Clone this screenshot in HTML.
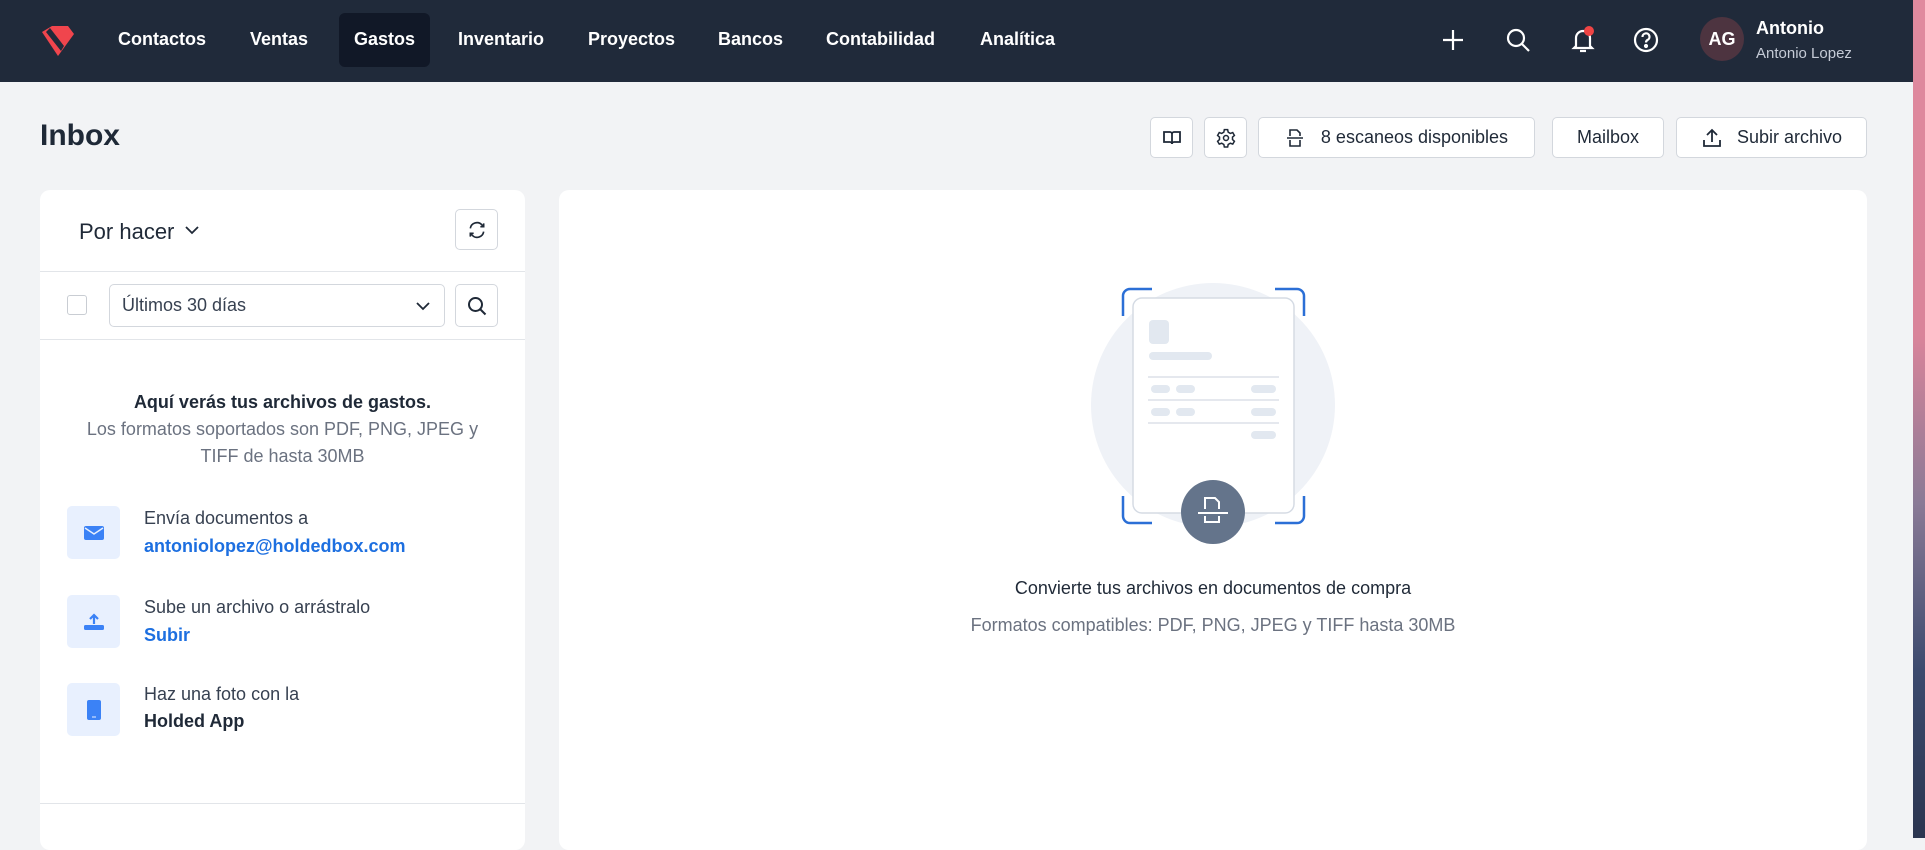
<!DOCTYPE html>
<html><head><meta charset="utf-8"><style>
*{box-sizing:border-box;margin:0;padding:0}
body{width:1925px;height:838px;overflow:hidden;background:#f2f3f5;font-family:"Liberation Sans",sans-serif;color:#1f2937;position:relative}
.a{position:absolute}
.nav{left:0;top:0;width:1913px;height:82px;background:#202a3a}
.ni{position:absolute;top:29px;color:#fff;font-weight:bold;font-size:18px}
.btn{position:absolute;background:#fff;border:1px solid #d3d7dd;border-radius:5px;top:117px;height:41px;display:flex;align-items:center;justify-content:center;font-size:18px;color:#1f2937}
.panel{background:#fff;border-radius:10px}
.ib{position:absolute;left:67px;width:53px;height:53px;background:#e8f0fe;border-radius:5px;display:flex;align-items:center;justify-content:center}
.t{position:absolute;left:144px;font-size:18px;color:#374151}
</style></head><body>
<div class="a nav"></div>
<svg class="a" style="left:38px;top:24px" width="40" height="34" viewBox="0 0 40 34"><path d="M4 8 L14 2 L30 2 L36 10 L20 32 Z" fill="#f0454d"/><path d="M12 4 L26 22 L23 27 L8 8 Z" fill="#202a3a"/></svg>
<div class="a" style="left:339px;top:13px;width:91px;height:54px;background:#111827;border-radius:6px"></div>
<div class="ni" style="left:118px">Contactos</div>
<div class="ni" style="left:250px">Ventas</div>
<div class="ni" style="left:354px">Gastos</div>
<div class="ni" style="left:458px">Inventario</div>
<div class="ni" style="left:588px">Proyectos</div>
<div class="ni" style="left:718px">Bancos</div>
<div class="ni" style="left:826px">Contabilidad</div>
<div class="ni" style="left:980px">Analítica</div>
<svg class="a" style="left:1440px;top:27px" width="26" height="26" viewBox="0 0 26 26" stroke="#fff" stroke-width="2.2" fill="none"><path d="M13 3v20M3 13h20"/></svg>
<svg class="a" style="left:1504px;top:26px" width="28" height="28" viewBox="0 0 28 28" stroke="#fff" stroke-width="2.2" fill="none"><circle cx="12" cy="12" r="8"/><path d="M18 18l7 7"/></svg>
<svg class="a" style="left:1569px;top:25px" width="28" height="30" viewBox="0 0 28 30" stroke="#fff" stroke-width="2.2" fill="none"><path d="M7 21V13a7 7 0 0 1 14 0v8l2 2H5z"/><path d="M11 26h6"/><circle cx="20" cy="6" r="5" fill="#ef4444" stroke="none"/></svg>
<svg class="a" style="left:1632px;top:26px" width="28" height="28" viewBox="0 0 28 28" fill="none" stroke="#fff" stroke-width="2.2"><circle cx="14" cy="14" r="11"/><path d="M10.5 11a3.5 3.5 0 1 1 5 3c-1 .6-1.5 1.3-1.5 2.5" /><circle cx="14" cy="20" r="1" fill="#fff"/></svg>
<div class="a" style="left:1700px;top:17px;width:44px;height:44px;border-radius:50%;background:#4d3440;color:#fff;font-weight:bold;font-size:18px;display:flex;align-items:center;justify-content:center">AG</div>
<div class="a" style="left:1756px;top:18px;color:#fff;font-weight:bold;font-size:18px">Antonio</div>
<div class="a" style="left:1756px;top:45px;color:#c5cbd6;font-size:15px">Antonio Lopez</div>
<div class="a" style="left:1913px;top:0;width:12px;height:838px;background:linear-gradient(#e08a9e 0%,#d9849a 40%,#8a7a96 60%,#3c4a6e 80%,#2b3550 100%)"></div>

<div class="a" style="left:40px;top:119px;font-size:30px;font-weight:bold;color:#1f2937">Inbox</div>
<div class="btn" style="left:1150px;width:43px"><svg width="20" height="18" viewBox="0 0 20 18" fill="none" stroke="#1f2937" stroke-width="1.8"><path d="M2 3h6a2 2 0 0 1 2 2v10a2 2 0 0 0-2-2H2zM18 3h-6a2 2 0 0 0-2 2v10a2 2 0 0 1 2-2h6z"/></svg></div>
<div class="btn" style="left:1204px;width:43px"><svg width="20" height="20" viewBox="0 0 24 24" fill="none" stroke="#1f2937" stroke-width="1.8"><circle cx="12" cy="12" r="3"/><path d="M10 2h4l.6 3 2.6 1.5 2.9-1 2 3.4-2.3 2v3l2.3 2-2 3.4-2.9-1-2.6 1.5-.6 3h-4l-.6-3-2.6-1.5-2.9 1-2-3.4 2.3-2v-3l-2.3-2 2-3.4 2.9 1L9.4 5z"/></svg></div>
<div class="btn" style="left:1258px;width:277px"><svg width="20" height="22" viewBox="0 0 20 22" fill="none" stroke="#1f2937" stroke-width="1.6" style="margin-right:16px"><path d="M5 9V3h7l3 3v3M5 13v6h10v-6M2 11h16" /></svg>8 escaneos disponibles</div>
<div class="btn" style="left:1552px;width:112px">Mailbox</div>
<div class="btn" style="left:1676px;width:191px"><svg width="22" height="22" viewBox="0 0 22 22" fill="none" stroke="#1f2937" stroke-width="1.8" style="margin-right:14px"><path d="M11 15V3M6 8l5-5 5 5M3 13v6h16v-6"/></svg>Subir archivo</div>

<div class="a panel" style="left:40px;top:190px;width:485px;height:660px"></div>
<div class="a" style="left:79px;top:219px;font-size:22px;color:#1f2937">Por hacer</div>
<svg class="a" style="left:184px;top:224px" width="16" height="12" viewBox="0 0 16 12" fill="none" stroke="#1f2937" stroke-width="1.8"><path d="M2 3l6 6 6-6"/></svg>
<div class="btn" style="left:455px;top:209px;width:43px;height:41px"><svg width="20" height="20" viewBox="0 0 24 24" fill="none" stroke="#1f2937" stroke-width="2"><path d="M4 10a8 8 0 0 1 14-4l2 2M20 4v4h-4M20 14a8 8 0 0 1-14 4l-2-2M4 20v-4h4"/></svg></div>
<div class="a" style="left:40px;top:271px;width:485px;height:1px;background:#e2e5e9"></div>
<div class="a" style="left:67px;top:295px;width:20px;height:20px;border:1.5px solid #c9cdd3;border-radius:3px"></div>
<div class="a" style="left:109px;top:284px;width:336px;height:43px;border:1px solid #d3d7dd;border-radius:5px;background:#fff"></div>
<div class="a" style="left:122px;top:295px;font-size:18px;color:#374151">Últimos 30 días</div>
<svg class="a" style="left:415px;top:300px" width="16" height="12" viewBox="0 0 16 12" fill="none" stroke="#1f2937" stroke-width="1.8"><path d="M2 3l6 6 6-6"/></svg>
<div class="btn" style="left:455px;top:284px;width:43px;height:43px"><svg width="22" height="22" viewBox="0 0 22 22" fill="none" stroke="#1f2937" stroke-width="2"><circle cx="9.5" cy="9.5" r="6.5"/><path d="M14.5 14.5l5 5"/></svg></div>
<div class="a" style="left:40px;top:339px;width:485px;height:1px;background:#e2e5e9"></div>
<div class="a" style="left:40px;top:389px;width:485px;text-align:center;font-size:18px;line-height:27px;color:#6b7280"><span style="color:#1f2937;font-weight:bold">Aquí verás tus archivos de gastos.</span><br>Los formatos soportados son PDF, PNG, JPEG y<br>TIFF de hasta 30MB</div>
<div class="ib" style="top:506px"><svg width="20" height="14" viewBox="0 0 20 14"><rect width="20" height="14" rx="2" fill="#3b82f6"/><path d="M1 2l9 6 9-6" stroke="#e8f0fe" stroke-width="1.5" fill="none"/></svg></div>
<div class="t" style="top:508px">Envía documentos a</div>
<div class="t" style="top:536px;color:#1d6fe0;font-weight:bold">antoniolopez@holdedbox.com</div>
<div class="ib" style="top:595px"><svg width="20" height="18" viewBox="0 0 20 18"><path d="M10 2v9M6 6l4-4 4 4" stroke="#3b82f6" stroke-width="2.2" fill="none"/><rect x="0" y="12" width="20" height="5" rx="1.5" fill="#3b82f6"/></svg></div>
<div class="t" style="top:597px">Sube un archivo o arrástralo</div>
<div class="t" style="top:625px;color:#1d6fe0;font-weight:bold">Subir</div>
<div class="ib" style="top:683px"><svg width="14" height="20" viewBox="0 0 14 20"><rect width="14" height="20" rx="2" fill="#3b82f6"/><path d="M5 17h4" stroke="#e8f0fe"/></svg></div>
<div class="t" style="top:684px">Haz una foto con la</div>
<div class="t" style="top:711px;color:#1f2937;font-weight:bold">Holded App</div>
<div class="a" style="left:40px;top:803px;width:485px;height:1px;background:#e2e5e9"></div>

<div class="a panel" style="left:559px;top:190px;width:1308px;height:660px"></div>
<svg class="a" style="left:1090px;top:280px" width="250" height="280" viewBox="1090 280 250 280">
<circle cx="1213" cy="405" r="122" fill="#eff2f7"/>
<rect x="1133" y="298" width="161" height="215" rx="9" fill="#fff" stroke="#d5dbe4" stroke-width="1.5"/>
<rect x="1149" y="320" width="20" height="24" rx="4" fill="#e2e8f0"/>
<rect x="1149" y="352" width="63" height="8" rx="4" fill="#e2e8f0"/>
<path d="M1148 377h131M1148 400h131M1148 423h131" stroke="#d5dbe4" stroke-width="1.2"/>
<g fill="#e2e8f0"><rect x="1151" y="385" width="19" height="8" rx="4"/><rect x="1176" y="385" width="19" height="8" rx="4"/><rect x="1251" y="385" width="25" height="8" rx="4"/><rect x="1151" y="408" width="19" height="8" rx="4"/><rect x="1176" y="408" width="19" height="8" rx="4"/><rect x="1251" y="408" width="25" height="8" rx="4"/><rect x="1251" y="431" width="25" height="8" rx="4"/></g>
<g fill="none" stroke="#2b6fd6" stroke-width="2.5"><path d="M1123 316v-20a7 7 0 0 1 7-7h22M1275 289h22a7 7 0 0 1 7 7v20M1123 496v20a7 7 0 0 0 7 7h22M1275 523h22a7 7 0 0 0 7-7v-20"/></g>
<circle cx="1213" cy="512" r="32" fill="#64748b"/>
<g fill="none" stroke="#fff" stroke-width="2"><path d="M1205 509v-11h10l4 4v7M1205 516v6h14v-6M1198 513h30"/></g>
</svg>
<div class="a" style="left:559px;top:578px;width:1308px;text-align:center;font-size:18px;color:#1f2937">Convierte tus archivos en documentos de compra</div>
<div class="a" style="left:559px;top:615px;width:1308px;text-align:center;font-size:18px;color:#6b7280">Formatos compatibles: PDF, PNG, JPEG y TIFF hasta 30MB</div>
</body></html>
